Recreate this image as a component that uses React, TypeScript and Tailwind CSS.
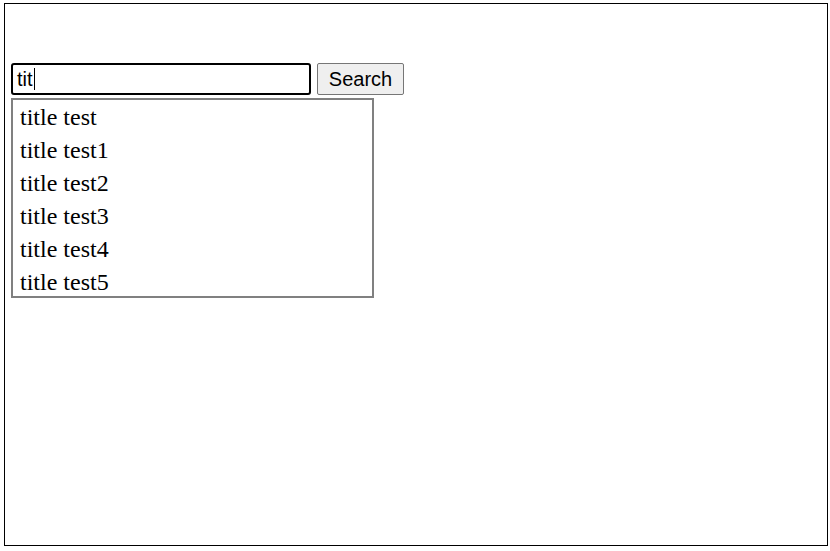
const items = ["title test", "title test1", "title test2", "title test3", "title test4", "title test5"];

export default function App() {
  return (
    <div className="h-[551px] w-[830px] bg-white pl-[4px] pt-[3px]">
      <div className="h-[543px] w-[824px] border border-black pl-[6px] pt-[59px]">
        <div className="flex items-center gap-[6px]">
          <div className="flex h-[32px] w-[300px] items-center rounded-[3px] border-2 border-black pl-[4px] font-['Liberation_Sans',Arial,sans-serif] text-[20px] text-black">
            tit<span className="ml-[1px] inline-block h-[22px] w-[1px] bg-black" />
          </div>
          <button className="h-[32px] w-[87px] rounded-[2px] border border-[#767676] bg-[#efefef] font-['Liberation_Sans',Arial,sans-serif] text-[20px] text-black">
            Search
          </button>
        </div>
        <ul className="mt-[3px] h-[200px] w-[363px] overflow-hidden border-2 border-[#808080] pt-[1px] font-['Liberation_Serif','Times_New_Roman',serif] text-[24px] text-black">
          {items.map((item) => (
            <li key={item} className="h-[33px] pl-[7px] leading-[33px]">
              {item}
            </li>
          ))}
        </ul>
      </div>
    </div>
  );
}
